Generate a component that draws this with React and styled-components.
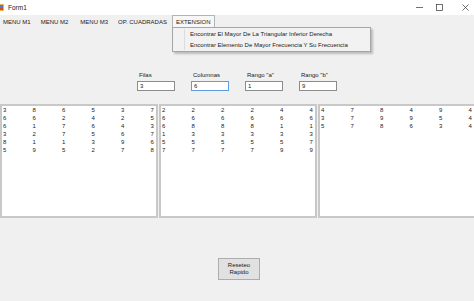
import React from "react";
import styled, { createGlobalStyle, css } from "styled-components";

const GlobalStyle = createGlobalStyle`
  html, body {
    margin: 0;
    padding: 0;
    background: #f0f0f0;
    overflow: hidden;
  }
  body {
    font-family: "Liberation Sans", Arial, sans-serif;
  }
`;

const Window = styled.div`
  width: 474px;
  height: 301px;
  display: flex;
  flex-direction: column;
  background: #f0f0f0;
  color: #1a1a1a;
  font-size: 6px;
  overflow: hidden;
`;

const TitleBar = styled.div`
  height: 15px;
  flex: none;
  background: #fff;
  display: flex;
  align-items: center;
`;

const Title = styled.span`
  margin-left: 3px;
  font-size: 6.5px;
  color: #222;
`;

const Controls = styled.div`
  margin-left: auto;
  display: flex;
  align-items: center;
  padding-right: 5px;
`;

const ControlIcon = styled.svg`
  width: 7px;
  height: 7px;
  margin-left: ${(p) => p.$gap}px;
`;

const MenuBar = styled.div`
  height: 13px;
  flex: none;
  display: flex;
  align-items: stretch;
`;

const MenuItem = styled.div`
  position: relative;
  display: flex;
  align-items: center;
  padding: 0 ${(p) => p.$pad}px;
  border: 1px solid transparent;
  white-space: nowrap;
  ${(p) =>
    p.$open &&
    css`
      background: #f7f7f7;
      border-color: #b4b4b4;
      border-bottom-color: transparent;
    `}
`;

const Dropdown = styled.div`
  position: absolute;
  top: 100%;
  left: -1px;
  width: 197px;
  padding: 1px 0;
  background: #f2f2f2;
  border: 1px solid #a6a6a6;
  box-shadow: 2px 2px 2px rgba(0, 0, 0, 0.22);
  z-index: 10;
`;

const Gutter = styled.div`
  position: absolute;
  left: 11px;
  top: 1px;
  bottom: 1px;
  width: 1px;
  background: #dcdcdc;
`;

const DropItem = styled.div`
  height: 10.5px;
  display: flex;
  align-items: center;
  padding-left: 17px;
  white-space: nowrap;
`;

const Body = styled.div`
  flex: 1;
  display: flex;
  flex-direction: column;
  padding-top: 43px;
`;

const Params = styled.div`
  display: flex;
  gap: 16px;
  padding-left: 137px;
`;

const Field = styled.div`
  display: flex;
  flex-direction: column;
  width: 38px;
`;

const Label = styled.label`
  height: 8px;
  line-height: 8px;
  margin-left: 2px;
  white-space: nowrap;
`;

const Input = styled.input`
  width: 100%;
  height: 10px;
  margin: 2px 0 0;
  box-sizing: border-box;
  padding: 0 2px;
  border: 1px solid ${(p) => (p.$focus ? "#5d9fdc" : "#8c8c8c")};
  background: #fff;
  font-family: inherit;
  font-size: 6px;
  color: #1a1a1a;
  outline: none;
`;

const Panels = styled.div`
  display: grid;
  grid-template-columns: 158px 158px 1fr;
  column-gap: 1px;
  margin-top: 13px;
  height: 114px;
`;

const Panel = styled.div`
  box-sizing: border-box;
  min-width: 0;
  background: #fff;
  border: 2px solid #c8c8c8;
  ${(p) => p.$cut && "border-right: none;"}
  padding: 0 1px;
  line-height: 8px;
  overflow: hidden;
`;

const Row = styled.div`
  display: flex;
`;

const Cell = styled.span`
  flex: none;
  width: 29.5px;
  &:last-child {
    width: auto;
  }
`;

const ButtonRow = styled.div`
  display: flex;
  padding-left: 218px;
  margin-top: 40px;
`;

const ResetButton = styled.button`
  width: 42px;
  height: 22px;
  padding: 0;
  background: #e1e1e1;
  border: 1px solid #adadad;
  font-family: inherit;
  font-size: 6px;
  line-height: 7px;
  color: #1a1a1a;
`;

const matrices = [
  [
    [3, 8, 6, 5, 3, 7],
    [6, 6, 2, 4, 2, 5],
    [6, 1, 7, 6, 4, 3],
    [3, 2, 7, 5, 6, 7],
    [8, 1, 1, 3, 9, 6],
    [5, 9, 5, 2, 7, 8],
  ],
  [
    [2, 2, 2, 2, 4, 4],
    [6, 6, 6, 6, 6, 6],
    [6, 8, 8, 8, 1, 1],
    [1, 3, 3, 3, 3, 3],
    [5, 5, 5, 5, 5, 7],
    [7, 7, 7, 7, 9, 9],
  ],
  [
    [4, 7, 8, 4, 9, 4],
    [3, 7, 9, 9, 5, 4],
    [5, 7, 8, 6, 3, 4],
  ],
];

const params = [
  { label: "Filas", value: "3" },
  { label: "Columnas", value: "6", focus: true },
  { label: 'Rango "a"', value: "1" },
  { label: 'Rango "b"', value: "9" },
];

function AppIcon() {
  return (
    <svg width="8" height="9" viewBox="0 0 8 9" style={{ marginLeft: -3 }}>
      <rect x="0" y="1" width="7" height="7" fill="#e8b84a" />
      <rect x="1" y="2" width="5" height="3" fill="#4a7fc1" />
      <rect x="1" y="5" width="5" height="2" fill="#d9462c" />
    </svg>
  );
}

export default function App() {
  return (
    <Window>
      <GlobalStyle />
      <TitleBar>
        <AppIcon />
        <Title>Form1</Title>
        <Controls>
          <ControlIcon viewBox="0 0 7 7" $gap={0}>
            <line x1="0" y1="3.5" x2="7" y2="3.5" stroke="#333" strokeWidth="0.7" />
          </ControlIcon>
          <ControlIcon viewBox="0 0 7 7" $gap={13}>
            <rect x="0.5" y="0.5" width="6" height="6" fill="none" stroke="#333" strokeWidth="0.7" />
          </ControlIcon>
          <ControlIcon viewBox="0 0 7 7" $gap={19}>
            <path d="M0.5 0.5 L6.5 6.5 M6.5 0.5 L0.5 6.5" stroke="#333" strokeWidth="0.7" />
          </ControlIcon>
        </Controls>
      </TitleBar>

      <MenuBar>
        <MenuItem $pad={2}>MENU M1</MenuItem>
        <MenuItem $pad={6}>MENU M2</MenuItem>
        <MenuItem $pad={4}>MENU M3</MenuItem>
        <MenuItem $pad={4}>OP. CUADRADAS</MenuItem>
        <MenuItem $pad={3} $open>
          EXTENSION
          <Dropdown>
            <Gutter />
            <DropItem>Encontrar El Mayor De La Triangular Inferior Derecha</DropItem>
            <DropItem>Encontrar Elemento De Mayor Frecuencia Y Su Frecuencia</DropItem>
          </Dropdown>
        </MenuItem>
      </MenuBar>

      <Body>
        <Params>
          {params.map((p) => (
            <Field key={p.label}>
              <Label>{p.label}</Label>
              <Input readOnly value={p.value} $focus={p.focus} />
            </Field>
          ))}
        </Params>

        <Panels>
          {matrices.map((m, i) => (
            <Panel key={i} $cut={i === matrices.length - 1}>
              {m.map((row, r) => (
                <Row key={r}>
                  {row.map((v, c) => (
                    <Cell key={c}>{v}</Cell>
                  ))}
                </Row>
              ))}
            </Panel>
          ))}
        </Panels>

        <ButtonRow>
          <ResetButton>
            Reseteo
            <br />
            Rapido
          </ResetButton>
        </ButtonRow>
      </Body>
    </Window>
  );
}
